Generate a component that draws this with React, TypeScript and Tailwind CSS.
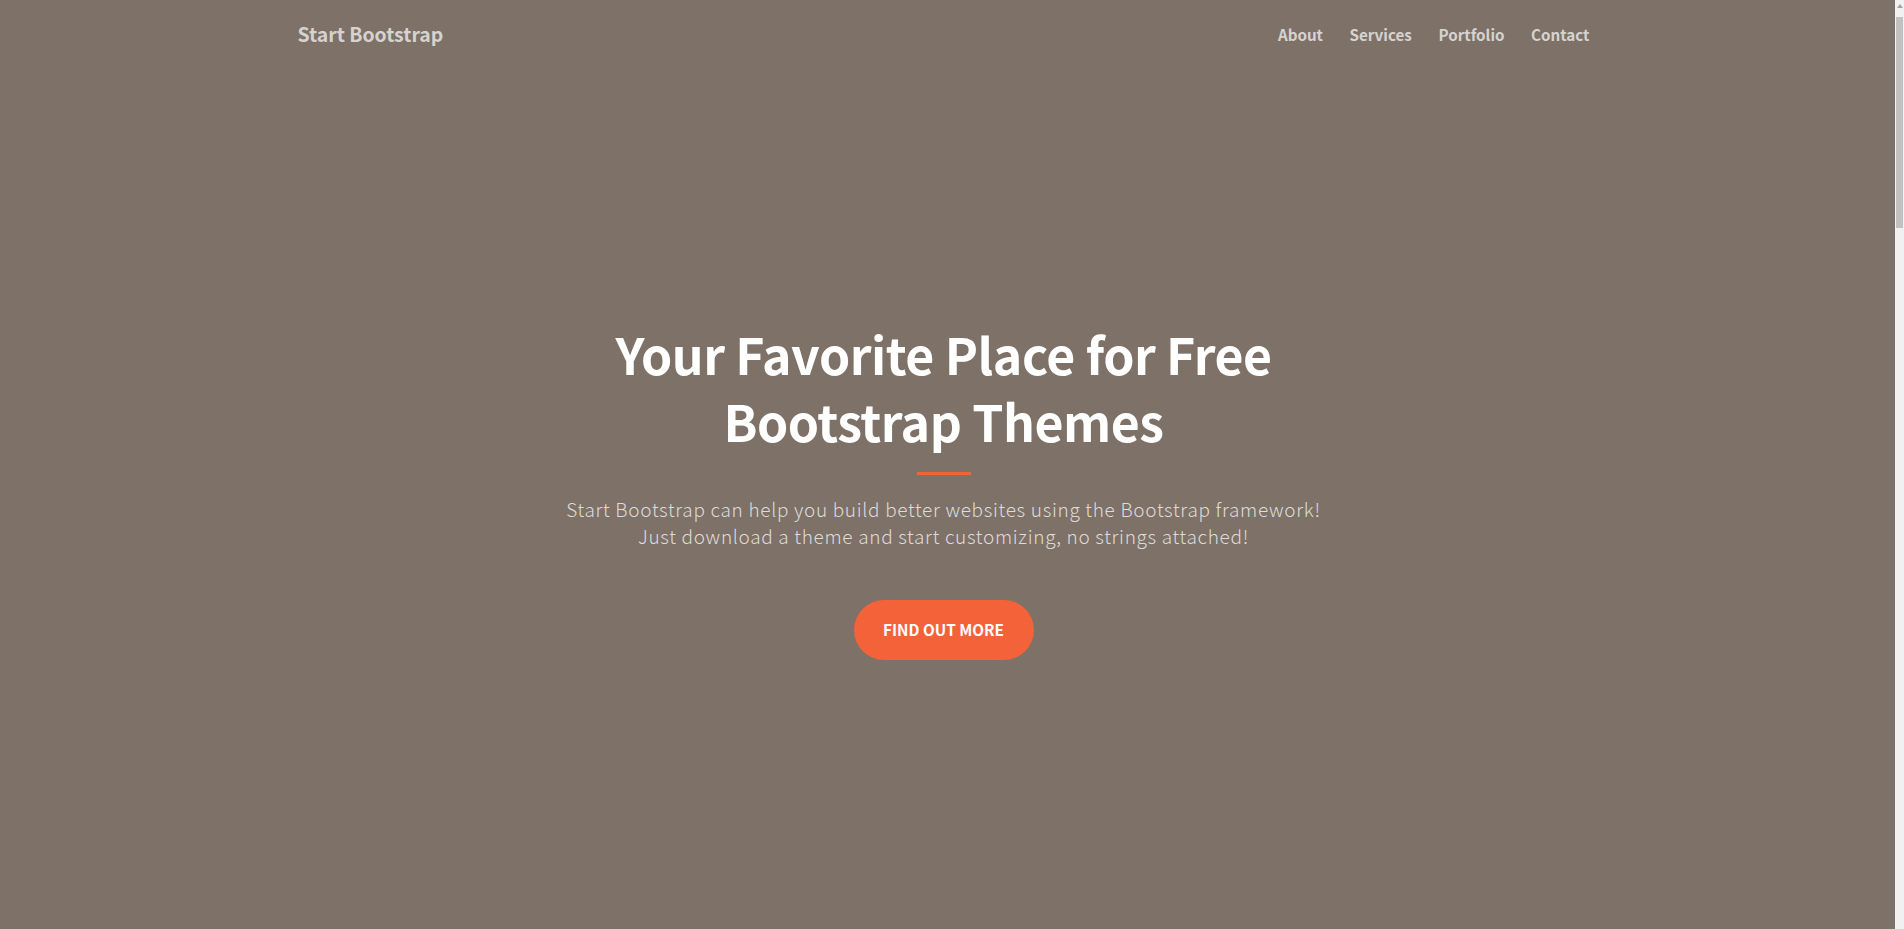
import React from "react";

export default function App() {
  return (
    <div
      className="relative flex h-[929px] w-full overflow-hidden bg-[#7d7168]"
      style={{ fontFamily: '"Noto Sans CJK KR", "Noto Sans", sans-serif' }}
    >
      <div className="flex flex-1 flex-col pr-2">
        <nav className="flex h-[68px] items-center">
          <div className="mx-auto flex w-[1320px] items-center justify-between px-3">
            <a className="pl-[2px] text-[19.4px] font-bold text-white/70">Start Bootstrap</a>
            <ul className="flex items-center gap-[26.5px] pr-[2px] text-[15.2px] font-bold text-white/70">
              <li>About</li>
              <li>Services</li>
              <li>Portfolio</li>
              <li>Contact</li>
            </ul>
          </div>
        </nav>
        <section className="flex flex-col items-center pt-[252px] text-center">
          <h1 className="text-[50px] font-bold leading-[67.2px] tracking-[-0.5px] text-white">
            Your Favorite Place for Free
            <br />
            Bootstrap Themes
          </h1>
          <div className="mt-[18px] h-[3px] w-[54px] bg-[#f4623a]" />
          <p className="mt-[21px] text-[19px] font-light leading-[26.7px] tracking-[0.69px] text-white/75">
            Start Bootstrap can help you build better websites using the Bootstrap framework!
            <br />
            Just download a theme and start customizing, no strings attached!
          </p>
          <a className="mt-[50px] flex h-[60px] w-[180px] items-center justify-center rounded-full bg-[#f4623a] text-[15.3px] font-bold uppercase text-white">
            Find Out More
          </a>
        </section>
      </div>
      <div className="flex w-[9px] flex-col bg-[#f1f1f1]">
        <div className="flex h-[17px] items-start justify-center pt-[4px]">
          <div className="h-0 w-0 border-x-[3px] border-b-[4px] border-x-transparent border-b-[#a3a3a3]" />
        </div>
        <div className="ml-[1px] h-[211px] w-[7px] bg-[#c1c1c1]" />
      </div>
    </div>
  );
}
